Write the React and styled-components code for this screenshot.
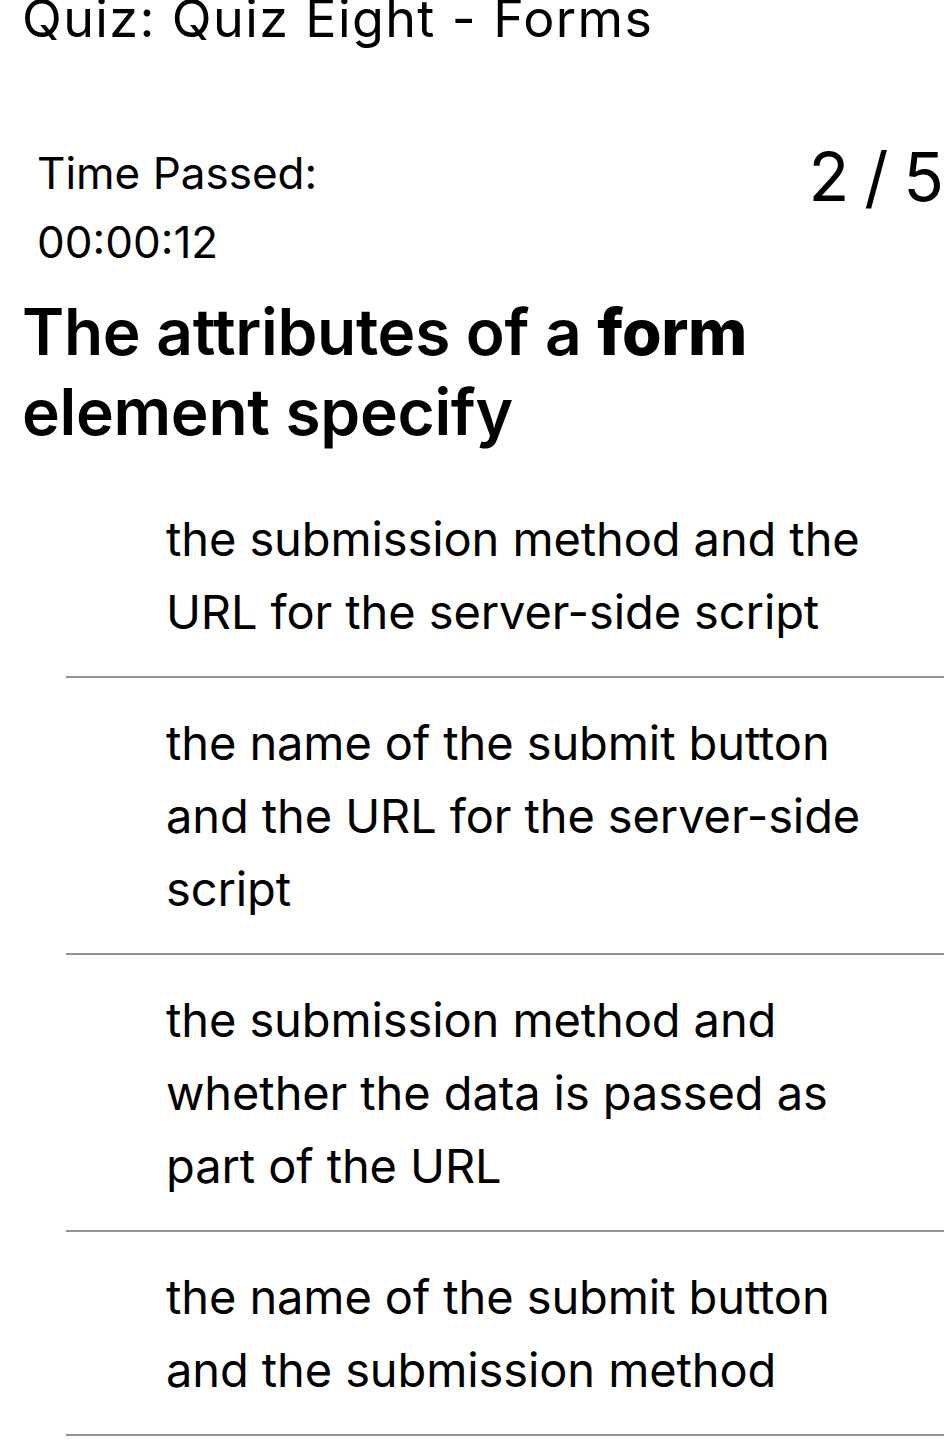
import styled, { createGlobalStyle } from "styled-components"

const GlobalStyle = createGlobalStyle`
    html, body {
        margin: 0;
        padding: 0;
        background: #ffffff;
    }
    body {
        font-family: Inter, "Noto Sans", "Liberation Sans", sans-serif;
        color: #000000;
        -webkit-font-smoothing: antialiased;
    }
`

const Page = styled.div`
    width: 944px;
    height: 1446px;
    overflow: hidden;
    padding-left: 22px;
    box-sizing: border-box;
`

const Title = styled.h1`
    margin: -11px 0 0;
    font-size: 52px;
    line-height: 60px;
    font-weight: 400;
    letter-spacing: 1.4px;
    white-space: nowrap;
`

const StatusRow = styled.div`
    display: flex;
    justify-content: space-between;
    align-items: flex-start;
    margin-top: 87px;
`

const Timer = styled.div`
    display: flex;
    flex-direction: column;
    padding-left: 15px;
    margin-top: 3px;

    span {
        font-size: 44px;
        line-height: 69px;
    }
`

const Counter = styled.div`
    font-size: 67px;
    line-height: 81px;
    letter-spacing: -2px;
    padding-right: 2px;
    white-space: nowrap;
`

const Question = styled.h2`
    margin: 15px 0 0;
    font-size: 64px;
    line-height: 80px;
    font-weight: 600;
    letter-spacing: -0.3px;

    strong {
        font-weight: 800;
    }
`

const OptionList = styled.ul`
    list-style: none;
    margin: 22px 0 0 44px;
    padding: 0;
`

const Option = styled.li`
    padding: 28px 49px 28px 100px;
    border-bottom: 2px solid #939393;
    font-size: 47px;
    line-height: 73px;
    letter-spacing: -0.1px;
`

const options = [
    "the submission method and the URL for the server-side script",
    "the name of the submit button and the URL for the server-side script",
    "the submission method and whether the data is passed as part of the URL",
    "the name of the submit button and the submission method",
]

const App = () => {
    return (
        <>
            <GlobalStyle />
            <Page>
                <Title>Quiz: Quiz Eight - Forms</Title>
                <StatusRow>
                    <Timer>
                        <span>Time Passed:</span>
                        <span>00:00:12</span>
                    </Timer>
                    <Counter>2 / 5</Counter>
                </StatusRow>
                <Question>
                    The attributes of a <strong>form</strong> element specify
                </Question>
                <OptionList>
                    {options.map(text => (
                        <Option key={text}>{text}</Option>
                    ))}
                </OptionList>
            </Page>
        </>
    )
}

export default App
